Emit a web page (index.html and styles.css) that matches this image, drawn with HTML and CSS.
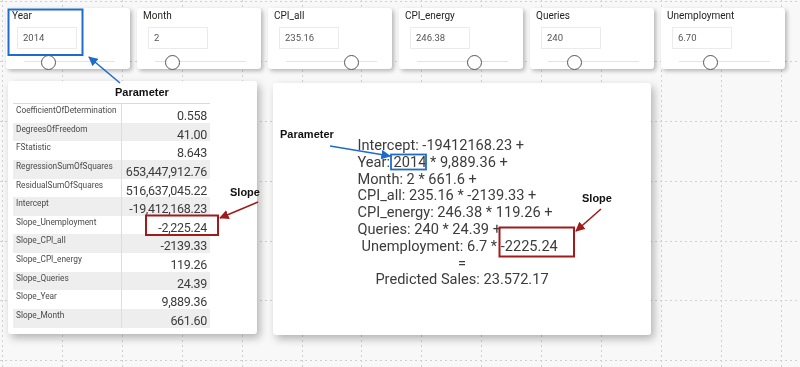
FILE: index.html
```html
<!DOCTYPE html>
<html lang="en">
<head>
<meta charset="utf-8">
<title>Regression Report</title>
<link rel="stylesheet" href="styles.css">
</head>
<body>
<svg class="grid" width="800" height="367" viewBox="0 0 800 367" aria-hidden="true">
  <g class="grid-lines">
    <line x1="2.5" y1="0" x2="2.5" y2="367"/>
    <line x1="62.5" y1="0" x2="62.5" y2="367"/>
    <line x1="122.5" y1="0" x2="122.5" y2="367"/>
    <line x1="182.5" y1="0" x2="182.5" y2="367"/>
    <line x1="242.5" y1="0" x2="242.5" y2="367"/>
    <line x1="302.5" y1="0" x2="302.5" y2="367"/>
    <line x1="361.5" y1="0" x2="361.5" y2="367"/>
    <line x1="421.5" y1="0" x2="421.5" y2="367"/>
    <line x1="481.5" y1="0" x2="481.5" y2="367"/>
    <line x1="541.5" y1="0" x2="541.5" y2="367"/>
    <line x1="601.5" y1="0" x2="601.5" y2="367"/>
    <line x1="661.5" y1="0" x2="661.5" y2="367"/>
    <line x1="721.5" y1="0" x2="721.5" y2="367"/>
    <line x1="781.5" y1="0" x2="781.5" y2="367"/>
    <line x1="0" y1="1.5" x2="800" y2="1.5"/>
    <line x1="0" y1="61.5" x2="800" y2="61.5"/>
    <line x1="0" y1="121.5" x2="800" y2="121.5"/>
    <line x1="0" y1="181.5" x2="800" y2="181.5"/>
    <line x1="0" y1="241.5" x2="800" y2="241.5"/>
    <line x1="0" y1="300.5" x2="800" y2="300.5"/>
    <line x1="0" y1="360.5" x2="800" y2="360.5"/>
  </g>
</svg>

<main class="page">
  <section class="slicers">
    <div class="slicer">
      <div class="slicer-title">Year</div>
      <div class="slicer-input">2014</div>
      <div class="slider"><span class="knob" style="left:42px"></span></div>
    </div>
    <div class="slicer">
      <div class="slicer-title">Month</div>
      <div class="slicer-input">2</div>
      <div class="slider"><span class="knob" style="left:35px"></span></div>
    </div>
    <div class="slicer">
      <div class="slicer-title">CPI_all</div>
      <div class="slicer-input">235.16</div>
      <div class="slider"><span class="knob" style="left:83px"></span></div>
    </div>
    <div class="slicer">
      <div class="slicer-title">CPI_energy</div>
      <div class="slicer-input">246.38</div>
      <div class="slider"><span class="knob" style="left:75px"></span></div>
    </div>
    <div class="slicer">
      <div class="slicer-title">Queries</div>
      <div class="slicer-input">240</div>
      <div class="slider"><span class="knob" style="left:44px"></span></div>
    </div>
    <div class="slicer">
      <div class="slicer-title">Unemployment</div>
      <div class="slicer-input">6.70</div>
      <div class="slider"><span class="knob" style="left:49px"></span></div>
    </div>
  </section>

  <section class="visuals">
    <div class="card table-card">
      <div class="stats">
        <div class="row"><span class="label">CoefficientOfDetermination</span><span class="value">0.558</span></div>
        <div class="row"><span class="label">DegreesOfFreedom</span><span class="value">41.00</span></div>
        <div class="row"><span class="label">FStatistic</span><span class="value">8.643</span></div>
        <div class="row"><span class="label">RegressionSumOfSquares</span><span class="value">653,447,912.76</span></div>
        <div class="row"><span class="label">ResidualSumOfSquares</span><span class="value">516,637,045.22</span></div>
        <div class="row"><span class="label">Intercept</span><span class="value">-19,412,168.23</span></div>
        <div class="row"><span class="label">Slope_Unemployment</span><span class="value">-2,225.24</span></div>
        <div class="row"><span class="label">Slope_CPI_all</span><span class="value">-2139.33</span></div>
        <div class="row"><span class="label">Slope_CPI_energy</span><span class="value">119.26</span></div>
        <div class="row"><span class="label">Slope_Queries</span><span class="value">24.39</span></div>
        <div class="row"><span class="label">Slope_Year</span><span class="value">9,889.36</span></div>
        <div class="row"><span class="label">Slope_Month</span><span class="value">661.60</span></div>
      </div>
    </div>

    <div class="card formula-card">
      <div class="formula-terms">
        <div class="line">Intercept: -19412168.23 +</div>
        <div class="line">Year: 2014 * 9,889.36 +</div>
        <div class="line">Month: 2 * 661.6 +</div>
        <div class="line">CPI_all: 235.16 * -2139.33 +</div>
        <div class="line">CPI_energy: 246.38 * 119.26 +</div>
        <div class="line">Queries: 240 * 24.39 +</div>
        <div class="line indent">Unemployment: 6.7 * -2225.24</div>
      </div>
      <div class="line centered">=</div>
      <div class="line centered">Predicted Sales: 23.572.17</div>
    </div>
  </section>
</main>

<svg class="annotations" width="800" height="367" viewBox="0 0 800 367" aria-hidden="true">
  <defs>
    <marker id="head-blue" viewBox="0 0 10 10" refX="9" refY="5" markerWidth="6" markerHeight="6" orient="auto">
      <path d="M0 0 L10 5 L0 10 Z" fill="#1e6cc8"/>
    </marker>
    <marker id="head-red" viewBox="0 0 10 10" refX="9" refY="5" markerWidth="6" markerHeight="6" orient="auto">
      <path d="M0 0 L10 5 L0 10 Z" fill="#a01c1c"/>
    </marker>
  </defs>
  <rect class="box-blue" x="8.5" y="9.5" width="74" height="45.5"/>
  <line class="arrow-blue" x1="120" y1="83" x2="89" y2="57" marker-end="url(#head-blue)"/>
  <text class="note" x="115" y="96">Parameter</text>

  <rect class="box-blue thin" x="391" y="154.5" width="35" height="15"/>
  <line class="arrow-blue" x1="330" y1="146" x2="390" y2="156" marker-end="url(#head-blue)"/>
  <text class="note" x="280" y="138">Parameter</text>

  <rect class="box-red" x="146" y="215.5" width="72" height="19.5"/>
  <line class="arrow-red" x1="258" y1="202" x2="220" y2="218" marker-end="url(#head-red)"/>
  <text class="note" x="230" y="196">Slope</text>

  <rect class="box-red" x="499.5" y="227.5" width="74.5" height="29"/>
  <line class="arrow-red" x1="601" y1="209" x2="576" y2="231" marker-end="url(#head-red)"/>
  <text class="note" x="582" y="202">Slope</text>
</svg>
</body>
</html>
```

FILE: styles.css
```css
* {
  box-sizing: border-box;
}

html,
body {
  margin: 0;
  padding: 0;
  width: 800px;
  height: 367px;
  overflow: hidden;
  background: #f8f8f8;
  font-family: Roboto, "Liberation Sans", sans-serif;
  color: #333333;
}

.grid {
  position: fixed;
  left: 0;
  top: 0;
  z-index: 0;
}

.grid-lines line {
  stroke: #d0d0d0;
  stroke-width: 1;
  stroke-dasharray: 2 3;
}

.page {
  position: relative;
  z-index: 1;
  padding: 8px 0 0 6px;
}

/* ---------- slicers ---------- */
.slicers {
  display: flex;
  gap: 7px;
}

.slicer {
  position: relative;
  width: 124px;
  height: 61px;
  background: #ffffff;
  border-radius: 3px;
  box-shadow: 2px 2px 4px rgba(0, 0, 0, 0.28);
  padding: 2px 0 0 6px;
}

.slicer-title {
  font-size: 10px;
  line-height: 12px;
  color: #252423;
}

.slicer-input {
  margin: 5px 0 0 5px;
  width: 60px;
  height: 22px;
  border: 1px solid #ebebeb;
  font-size: 9.5px;
  line-height: 20px;
  padding-left: 5px;
  color: #555555;
}

.slider {
  position: absolute;
  left: 18px;
  top: 53px;
  width: 91px;
  height: 1px;
  background: #e3e3e3;
}

.knob {
  position: absolute;
  top: -6px;
  width: 15px;
  height: 15px;
  margin-left: -25.5px;
  border: 1.4px solid #555555;
  border-radius: 50%;
  background: #ffffff;
}

/* ---------- visual cards ---------- */
.visuals {
  display: flex;
  align-items: flex-start;
  gap: 16px;
  margin: 12px 0 0 2px;
}

.card {
  background: #ffffff;
  border-radius: 3px;
  box-shadow: 3px 4px 8px rgba(0, 0, 0, 0.28);
}

.table-card {
  width: 249px;
  height: 253px;
  padding: 22px 0 0 5px;
}

.stats {
  width: 197px;
  border-top: 1px solid #c9dcf0;
}

.row {
  display: flex;
  height: 18.64px;
}

.row:nth-child(even) {
  background: #eeeeee;
}

.label {
  width: 108px;
  padding: 1px 0 0 3px;
  font-size: 8.3px;
  line-height: 10px;
  color: #4a4a4a;
  white-space: nowrap;
}

.value {
  flex: 1;
  border-left: 1px solid #cfe0f3;
  padding: 4px 3px 0 0;
  text-align: right;
  font-size: 12.5px;
  line-height: 15px;
  letter-spacing: -0.3px;
  color: #3b3b3b;
  white-space: nowrap;
}

.formula-card {
  width: 378px;
  height: 252px;
  margin-top: 2px;
  padding-top: 54px;
  font-size: 14.6px;
  color: #3c3c3c;
}

.formula-terms {
  padding-left: 84.5px;
}

.line {
  line-height: 16.8px;
  white-space: pre;
}

.indent {
  padding-left: 4px;
}

.centered {
  text-align: center;
}

/* ---------- annotations ---------- */
.annotations {
  position: fixed;
  left: 0;
  top: 0;
  z-index: 5;
  pointer-events: none;
}

.box-blue {
  fill: none;
  stroke: #1e6cc8;
  stroke-width: 2;
}

.box-blue.thin {
  stroke-width: 1.8;
}

.box-red {
  fill: none;
  stroke: #a01c1c;
  stroke-width: 2;
}

.arrow-blue {
  stroke: #1e6cc8;
  stroke-width: 1.6;
}

.arrow-red {
  stroke: #a01c1c;
  stroke-width: 1.6;
}

.note {
  font-family: "Liberation Sans", Arial, sans-serif;
  font-weight: bold;
  font-size: 11px;
  fill: #111111;
}
```
